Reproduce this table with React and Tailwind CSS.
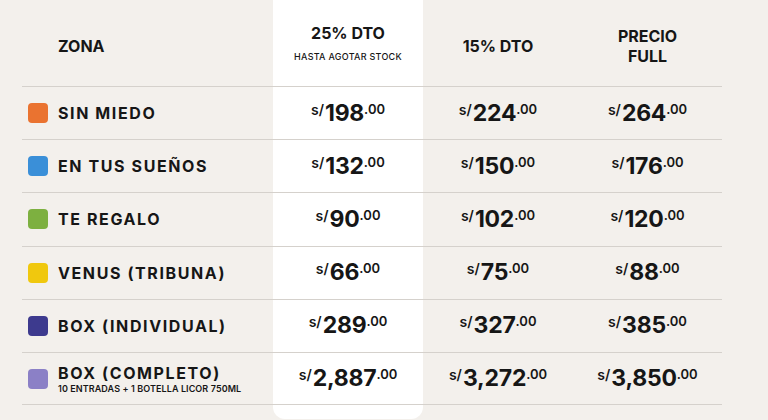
import React from 'react'

const rows = [
  { color: 'bg-[#ea7330]', name: 'SIN MIEDO', prices: ['198', '224', '264'] },
  { color: 'bg-[#3a8fd8]', name: 'EN TUS SUEÑOS', prices: ['132', '150', '176'] },
  { color: 'bg-[#7db040]', name: 'TE REGALO', prices: ['90', '102', '120'] },
  { color: 'bg-[#f0c80e]', name: 'VENUS (TRIBUNA)', prices: ['66', '75', '88'] },
  { color: 'bg-[#3d3a8e]', name: 'BOX (INDIVIDUAL)', prices: ['289', '327', '385'] },
  {
    color: 'bg-[#8b80c6]',
    name: 'BOX (COMPLETO)',
    sub: '10 ENTRADAS + 1 BOTELLA LICOR 750ML',
    prices: ['2,887', '3,272', '3,850']
  }
]

const Price = ({ value }) => (
  <div className="flex items-start text-[#161616] leading-none">
    <span className="text-[14px] font-semibold mt-[1px] mr-[1px]">s/</span>
    <span className="text-[23px] font-bold tracking-[-0.01em]">{value}</span>
    <span className="text-[13px] font-semibold mt-[1px]">.00</span>
  </div>
)

export default function App() {
  return (
    <div
      className="w-[768px] h-[420px] bg-[#f3f0ec] overflow-hidden"
      style={{ fontFamily: 'Inter, "Noto Sans", sans-serif' }}
    >
      <div className="ml-[22px] w-[700px]">
        {/* Header */}
        <div className="grid grid-cols-[251px_150px_150px_149px] h-[86px]">
          <div className="flex items-center pl-[36px] pt-[5px] text-[16px] font-bold text-[#161616]">ZONA</div>
          <div className="bg-white flex flex-col items-center justify-center pt-[3px] text-[#161616]">
            <div className="text-[16px] font-bold leading-none">25% DTO</div>
            <div className="text-[9px] font-medium mt-[9px] tracking-[0.03em]">HASTA AGOTAR STOCK</div>
          </div>
          <div className="flex items-center justify-center pt-[5px] text-[16px] font-bold text-[#161616]">15% DTO</div>
          <div className="flex flex-col items-center justify-center pt-[6px] text-[16px] font-bold leading-[20px] text-[#161616]">
            <div>PRECIO</div>
            <div>FULL</div>
          </div>
        </div>

        {/* Rows */}
        {rows.map((r, i) => (
          <div
            key={i}
            className={`grid grid-cols-[251px_150px_150px_149px] h-[53.2px] border-t border-[#d5d1cc] ${
              i === rows.length - 1 ? 'border-b' : ''
            }`}
          >
            <div className="flex items-center pl-[6px]">
              <div className={`w-[20px] h-[20px] rounded-[4px] ${r.color}`}></div>
              <div className="ml-[10px] text-[#161616]">
                <div className="text-[16px] font-bold tracking-[0.1em] leading-none">{r.name}</div>
                {r.sub && (
                  <div className="text-[9px] font-semibold tracking-[0.01em] leading-none mt-[3px]">{r.sub}</div>
                )}
              </div>
            </div>
            <div className="bg-white flex items-center justify-center">
              <Price value={r.prices[0]} />
            </div>
            <div className="flex items-center justify-center">
              <Price value={r.prices[1]} />
            </div>
            <div className="flex items-center justify-center">
              <Price value={r.prices[2]} />
            </div>
          </div>
        ))}

        <div className="grid grid-cols-[251px_150px_150px_149px] h-[14px]">
          <div></div>
          <div className="bg-white rounded-b-[12px]"></div>
        </div>
      </div>
    </div>
  )
}
